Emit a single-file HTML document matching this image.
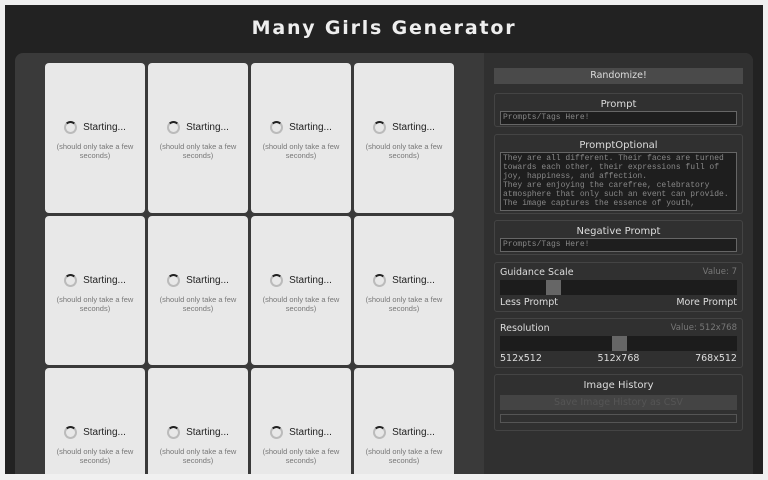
<!DOCTYPE html>
<html><head><style>
*{box-sizing:border-box;margin:0;padding:0}
html,body{width:768px;height:480px;overflow:hidden}
body{background:#f0f0f0;font-family:"Liberation Sans",sans-serif;position:relative}
#app{position:absolute;left:5px;top:5px;width:758px;height:469px;background:#222;overflow:hidden}
h1{position:absolute;left:0;width:758px;top:12px;text-align:center;color:#eee;font-size:19px;letter-spacing:1.8px;font-weight:bold;font-family:"DejaVu Sans",sans-serif}
#panel{position:absolute;left:10px;top:48px;width:738px;height:430px;background:#3a3a3a;border-radius:8px;overflow:hidden}
#right{position:absolute;left:469px;top:0;width:269px;height:430px;background:#303030}
.card{position:absolute;width:100px;background:#e8e8e8;border-radius:4px;text-align:center}
.st{position:absolute;left:0;right:0;top:58px;font-size:10px;color:#222;display:flex;justify-content:center;align-items:center}
.sp{width:13px;height:13px;border-radius:50%;border:2px solid #bbb;border-top-color:#222;margin-right:6px}
.sub{position:absolute;left:0;right:0;top:79px;font-size:7.5px;color:#777;line-height:9px}
.box{position:absolute;left:10px;width:249px;border:1px solid #444;border-radius:3px;color:#ddd;font-family:"DejaVu Sans",sans-serif}
.lbl{text-align:center;font-size:10px;margin-top:5px}
.ta{margin:1px 5px;background:#1e1e1e;border:1px solid #666;font-family:"Liberation Mono",monospace;font-size:8px;color:#888;padding:1px 2px;line-height:9px;overflow:hidden}
.row{display:flex;justify-content:space-between;font-size:9.5px;padding:0 5px}
.track{margin:2px 5px;height:15px;background:#1c1c1c;position:relative}
.thumb{position:absolute;top:0;width:15px;height:15px;background:#666}
</style></head><body>
<div id="app">
<h1>Many Girls Generator</h1>
<div id="panel">
<div id="right">
<div style="position:absolute;left:10px;top:15px;width:249px;height:16px;background:#4a4a4a;color:#ddd;font-size:9.5px;text-align:center;line-height:16px;font-family:'DejaVu Sans',sans-serif">Randomize!</div>
<div class="box" style="top:40px;height:34px"><div class="lbl">Prompt</div><div class="ta" style="height:14px">Prompts/Tags Here!</div></div>
<div class="box" style="top:81px;height:80px"><div class="lbl">PromptOptional</div><div class="ta" style="height:59px">They are all different. Their faces are turned towards each other, their expressions full of joy, happiness, and affection.<br>They are enjoying the carefree, celebratory atmosphere that only such an event can provide. The image captures the essence of youth,</div></div>
<div class="box" style="top:167px;height:35px"><div class="lbl">Negative Prompt</div><div class="ta" style="height:14px">Prompts/Tags Here!</div></div>
<div class="box" style="top:209px;height:50px"><div class="row" style="margin-top:4px"><span>Guidance Scale</span><span style="color:#777;font-size:8.5px">Value: 7</span></div><div class="track"><div class="thumb" style="left:46px"></div></div><div class="row"><span>Less Prompt</span><span>More Prompt</span></div></div>
<div class="box" style="top:265px;height:50px"><div class="row" style="margin-top:4px"><span>Resolution</span><span style="color:#777;font-size:8.5px">Value: 512x768</span></div><div class="track"><div class="thumb" style="left:112px"></div></div><div class="row"><span>512x512</span><span>512x768</span><span>768x512</span></div></div>
<div class="box" style="top:321px;height:57px"><div class="lbl" style="margin-top:5px">Image History</div><div style="margin:4px 5px;height:15px;background:#444;color:#555;font-size:9.5px;text-align:center;line-height:15px">Save Image History as CSV</div><div style="margin:0 5px;height:9px;border:1px solid #555"></div></div>
</div>
</div>
<div id="cards"></div>
</div>
<script>
var xs=[40,143,246,349],ys=[[58,150],[211,149],[363,120]],h='';
ys.forEach(function(y){xs.forEach(function(x){h+='<div class="card" style="left:'+x+'px;top:'+y[0]+'px;height:'+y[1]+'px"><div class="st"><div class="sp"></div>Starting...</div><div class="sub">(should only take a few<br>seconds)</div></div>';});});
document.getElementById('cards').innerHTML=h;
</script>
</body></html>
